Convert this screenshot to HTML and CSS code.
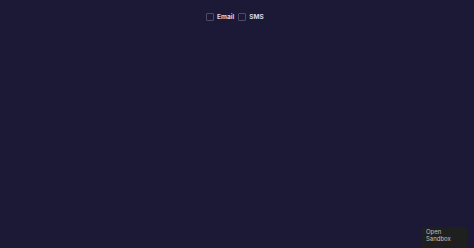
FILE: index.html
```html
<!DOCTYPE html>
<html>
<head>
<meta charset="utf-8">
<link rel="stylesheet" href="styles.css">
</head>
<body>
<div class="options">
  <label class="opt"><span class="box"></span><span class="label">Email</span></label>
  <label class="opt"><span class="box"></span><span class="label">SMS</span></label>
</div>
<button class="sandbox">Open<br>Sandbox</button>
</body>
</html>
```

FILE: styles.css
```css
html, body {
  margin: 0;
  padding: 0;
  height: 100%;
}
body {
  background: #1b1935;
  font-family: Inter, "Noto Sans", sans-serif;
  position: relative;
  overflow: hidden;
}
.options {
  display: flex;
  justify-content: center;
  gap: 4px;
  padding-top: 12px;
  padding-right: 4px;
}
.opt {
  display: flex;
  align-items: center;
  gap: 3px;
  height: 10px;
}
.box {
  width: 6px;
  height: 6px;
  border: 1px solid #4c4a6a;
  border-radius: 1px;
  background: #1b1935;
}
.label {
  color: #dcd8ea;
  font-size: 6.5px;
  font-weight: 700;
  line-height: 10px;
}
.sandbox {
  position: absolute;
  right: 7px;
  bottom: 0;
  width: 46px;
  height: 21px;
  background: #1f1f1f;
  border: none;
  color: #c0c0c0;
  font-family: Inter, "Noto Sans", sans-serif;
  font-size: 6px;
  line-height: 7px;
  text-align: left;
  padding: 1px 5px 0;
  margin: 0;
  box-sizing: border-box;
  display: flex;
  flex-direction: column;
  justify-content: flex-start;
}
```
